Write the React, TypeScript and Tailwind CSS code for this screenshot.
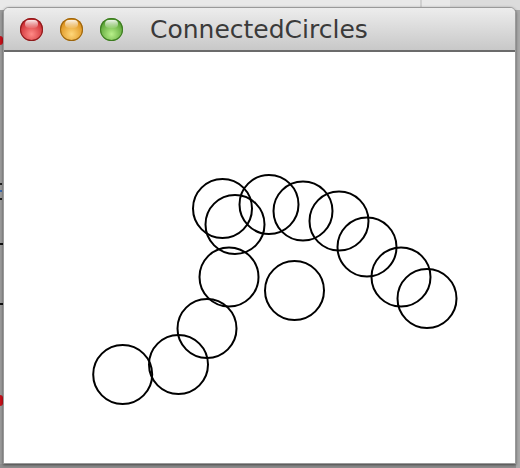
import React from "react";

const circles: [number, number][] = [
  [122.7, 374.5],
  [178.5, 364.5],
  [207, 328.5],
  [229, 277],
  [235, 224.5],
  [222.5, 208.5],
  [269, 204.5],
  [303, 211],
  [339, 221],
  [367, 247],
  [401, 277],
  [427, 298.5],
  [294.5, 290.5],
];

function Light({ from, to, ring }: { from: string; to: string; ring: string }) {
  return (
    <div
      className="w-[23px] h-[23px] rounded-full relative"
      style={{
        background: `radial-gradient(circle at 50% 70%, ${to} 0%, ${from} 75%)`,
        boxShadow: `inset 0 0 0 1px ${ring}`,
      }}
    >
      <div className="absolute left-[5px] top-[2px] w-[13px] h-[8px] rounded-full bg-gradient-to-b from-white/90 to-white/10" />
    </div>
  );
}

export default function App() {
  return (
    <div className="w-[520px] h-[468px] relative overflow-hidden bg-[#9c9c9c]">
      {/* desktop behind the window */}
      <div className="absolute left-0 top-0 w-[520px] h-[10px] bg-[#e9e9e9]" />
      <div className="absolute left-[420px] top-0 w-[2px] h-[10px] bg-[#d0d0d0]" />
      <div className="absolute left-[450px] top-0 w-[70px] h-[10px] bg-[#dcdcdc]" />
      <div className="absolute left-0 top-[36px] w-[3px] h-[9px] rounded-r-full bg-[#c8101a]" />
      <div className="absolute left-0 top-[395px] w-[3px] h-[11px] rounded-r-full bg-[#c8101a]" />
      <div className="absolute left-0 top-[183px] w-[2px] h-[2px] bg-[#222]" />
      <div className="absolute left-0 top-[190px] w-[2px] h-[2px] bg-[#3a6ab0]" />
      <div className="absolute left-0 top-[198px] w-[2px] h-[2px] bg-[#222]" />
      <div className="absolute left-0 top-[243px] w-[3px] h-[2px] bg-[#111]" />
      <div className="absolute left-0 top-[303px] w-[3px] h-[2px] bg-[#111]" />
      <div className="absolute left-0 top-[464px] w-[520px] h-[4px] bg-[#8e8e8e]" />
      <div className="absolute left-[516px] top-[10px] w-[4px] h-[458px] bg-[#a9a9a9]" />

      <div className="relative pl-[3px] pt-[7px]">
        <div className="w-[513px] h-[457px] flex flex-col rounded-t-[6px] border border-[#9a9a9a] bg-white shadow-[0_1px_3px_rgba(0,0,0,0.5)]">
          <div className="h-[42px] flex items-center rounded-t-[5px] bg-gradient-to-b from-[#ededed] to-[#c8c8c8] pl-[16px]">
            <div className="flex gap-[17px] pt-[1px]">
              <Light from="#c8232a" to="#ff8a86" ring="#8b1c1c" />
              <Light from="#d98a12" to="#ffd77a" ring="#9a6510" />
              <Light from="#4f9a2c" to="#b8f08a" ring="#3d7a22" />
            </div>
            <span
              className="ml-[27px] text-[25px] leading-none text-[#3a3a3a]"
              style={{ fontFamily: '"DejaVu Sans", "Open Sans", sans-serif' }}
            >
              ConnectedCircles
            </span>
          </div>
          <div className="h-[2px] bg-[#6b6b6b]" />
          <div className="flex-1 relative bg-white">
            <svg className="absolute left-[-4px] top-[-52px]" width="520" height="468">
              {circles.map(([x, y], i) => (
                <circle key={i} cx={x} cy={y} r={29.5} fill="none" stroke="#000" strokeWidth={2} />
              ))}
            </svg>
          </div>
        </div>
      </div>
    </div>
  );
}
